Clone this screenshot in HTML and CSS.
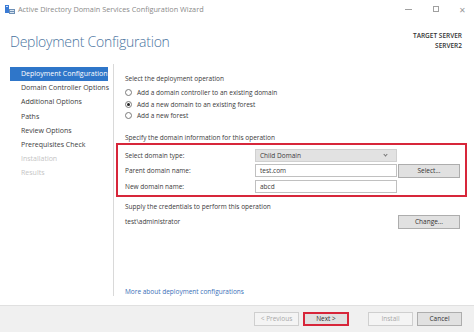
FILE: index.html
```html
<!DOCTYPE html>
<html lang="en">
<head>
    <meta charset="UTF-8">
    <title>Active Directory Domain Services Configuration Wizard</title>
    <link rel="stylesheet" href="styles.css">
</head>
<body>
    <div class="window">
        <div class="titlebar">
            <svg class="app-icon" width="10" height="9" viewBox="0 0 10 9">
                <rect x="0" y="0" width="4" height="8" fill="#3a7bd5"/>
                <rect x="1" y="1" width="2" height="1" fill="#cfe3ff"/>
                <rect x="4" y="4" width="6" height="5" fill="#6d8fb5"/>
                <rect x="5" y="5" width="4" height="1" fill="#d8e4f0"/>
                <rect x="5" y="7" width="4" height="1" fill="#d8e4f0"/>
            </svg>
            <span class="title-text">Active Directory Domain Services Configuration Wizard</span>
            <div class="controls">
                <span class="ctl ctl-min"></span>
                <span class="ctl ctl-max"></span>
                <span class="ctl ctl-close">&#x2715;</span>
            </div>
        </div>

        <div class="header">
            <h1>Deployment Configuration</h1>
            <div class="target">
                <div>TARGET SERVER</div>
                <div>SERVER2</div>
            </div>
        </div>

        <div class="main">
            <ul class="steps">
                <li class="active">Deployment Configuration</li>
                <li>Domain Controller Options</li>
                <li>Additional Options</li>
                <li>Paths</li>
                <li>Review Options</li>
                <li>Prerequisites Check</li>
                <li class="disabled">Installation</li>
                <li class="disabled">Results</li>
            </ul>

            <div class="content">
                <p class="section-title first">Select the deployment operation</p>
                <div class="radios">
                    <label class="radio"><span class="dot"></span>Add a domain controller to an existing domain</label>
                    <label class="radio checked"><span class="dot"></span>Add a new domain to an existing forest</label>
                    <label class="radio"><span class="dot"></span>Add a new forest</label>
                </div>

                <p class="section-title">Specify the domain information for this operation</p>
                <div class="domain-box">
                    <span class="field-label">Select domain type:</span>
                    <div class="select">Child Domain<span class="chevron"></span></div>
                    <span></span>

                    <span class="field-label">Parent domain name:</span>
                    <div class="textbox">test.com</div>
                    <button class="btn">Select...</button>

                    <span class="field-label">New domain name:</span>
                    <div class="textbox">abcd</div>
                    <span></span>
                </div>

                <p class="section-title supply">Supply the credentials to perform this operation</p>
                <div class="cred-row">
                    <span>test\administrator</span>
                    <button class="btn">Change...</button>
                </div>

                <a class="more" href="#">More about deployment configurations</a>
            </div>
        </div>

        <div class="footer">
            <button class="btn disabled">&lt; Previous</button>
            <button class="btn next">Next &gt;</button>
            <button class="btn disabled install">Install</button>
            <button class="btn">Cancel</button>
        </div>
    </div>
</body>
</html>
```

FILE: styles.css
```css
*,
*::before,
*::after{
    padding: 0;
    margin: 0;
    box-sizing: border-box;
}
body{
    background-color: #ffffff;
    font-family: "Open Sans", "Noto Sans", sans-serif;
    font-size: 6.5px;
    color: #3a3a3a;
}
.window{
    width: 474px;
    height: 332px;
    display: flex;
    flex-direction: column;
}

/* title bar */
.titlebar{
    height: 18px;
    display: flex;
    align-items: center;
    padding-left: 5px;
}
.app-icon{
    margin-right: 3px;
}
.title-text{
    color: #8a8a8a;
    font-size: 7.3px;
}
.controls{
    margin-left: auto;
    display: flex;
    align-items: center;
}
.ctl{
    width: 28px;
    display: flex;
    justify-content: center;
    align-items: center;
    color: #9a9a9a;
}
.ctl-min::before{
    content: "";
    width: 7px;
    height: 1px;
    background-color: #a0a0a0;
}
.ctl-max::before{
    content: "";
    width: 6px;
    height: 6px;
    border: 1px solid #a0a0a0;
}
.ctl-close{
    font-size: 8px;
    width: 24px;
}

/* header */
.header{
    height: 46px;
    display: flex;
    justify-content: space-between;
    align-items: flex-start;
    padding: 0 12px 0 10px;
}
.header h1{
    font-weight: 300;
    font-size: 14px;
    letter-spacing: -0.25px;
    color: #4a74a0;
    margin-top: 14px;
}
.target{
    text-align: right;
    font-size: 6.5px;
    font-weight: 600;
    color: #333;
    line-height: 10px;
    margin-top: 13px;
}

/* sidebar + content */
.main{
    height: 232px;
    display: flex;
}
.steps{
    list-style: none;
    flex-shrink: 0;
    width: 114px;
    padding: 3px 0 0 10px;
    border-right: 1px solid #d9d9d9;
    font-size: 7px;
}
.steps li{
    width: 98px;
    height: 14.2px;
    line-height: 14px;
    padding-left: 11px;
    white-space: nowrap;
    color: #3c3c3c;
}
.steps li.active{
    background-color: #2f76c9;
    color: #ffffff;
}
.steps li.disabled{
    color: #c4c4c4;
}

.content{
    flex: 1;
    min-width: 0;
    padding: 0 7px 0 2px;
    display: flex;
    flex-direction: column;
}
.section-title{
    padding-left: 9px;
    margin-top: 10px;
    line-height: 11px;
}
.section-title.first{
    margin-top: 9px;
}
.section-title.supply{
    margin-top: 4px;
}
.radios{
    padding-left: 9px;
    margin-top: 3px;
    display: flex;
    flex-direction: column;
}
.radio{
    display: flex;
    align-items: center;
    height: 11.5px;
}
.dot{
    width: 7px;
    height: 7px;
    border: 1px solid #7a7a7a;
    border-radius: 50%;
    margin: 0 5px 0 0;
    display: grid;
    place-items: center;
}
.radio.checked .dot::after{
    content: "";
    width: 3px;
    height: 3px;
    border-radius: 50%;
    background-color: #222;
}

.domain-box{
    border: 2px solid #d7263a;
    padding: 4px 5px 2px 7px;
    display: grid;
    grid-template-columns: 130px 142px 63px;
    row-gap: 2px;
    align-items: center;
}
.field-label{
    line-height: 13px;
}
.select,
.textbox{
    height: 13px;
    line-height: 11px;
    padding-left: 4px;
    border: 1px solid #c6c6c6;
    position: relative;
}
.select{
    background-color: #e2e2e2;
    border-color: #d0d0d0;
}
.textbox{
    background-color: #ffffff;
    border-color: #c0c0c0;
}
.chevron{
    position: absolute;
    right: 9px;
    top: 3px;
    width: 3px;
    height: 3px;
    border-right: 1px solid #777;
    border-bottom: 1px solid #777;
    transform: rotate(45deg);
}

.btn{
    font-family: inherit;
    font-size: 6.5px;
    color: #333;
    height: 14px;
    background-color: #e1e1e1;
    border: 1px solid #adadad;
}
.domain-box .btn{
    width: 62px;
    justify-self: end;
}

.cred-row{
    padding-left: 9px;
    margin-top: 3px;
    display: flex;
    justify-content: space-between;
    align-items: center;
}
.cred-row .btn{
    width: 62px;
    margin-right: 7px;
}

.more{
    margin-top: auto;
    margin-bottom: -1px;
    padding-left: 9px;
    color: #3a6fb7;
    text-decoration: none;
    line-height: 11px;
}

/* footer */
.footer{
    margin-top: 9px;
    flex: 1;
    background-color: #f0f0f0;
    border-top: 1px solid #e0e0e0;
    display: flex;
    justify-content: flex-end;
    align-items: center;
    gap: 4px;
    padding: 0 12px 1px 0;
}
.footer .btn{
    width: 45px;
}
.footer .btn.disabled{
    background-color: #f4f4f4;
    border-color: #cfcfcf;
    color: #a8a8a8;
}
.footer .btn.next{
    width: 46px;
    border: 2px solid #d7263a;
}
.footer .btn.install{
    margin-left: 15px;
}
```
